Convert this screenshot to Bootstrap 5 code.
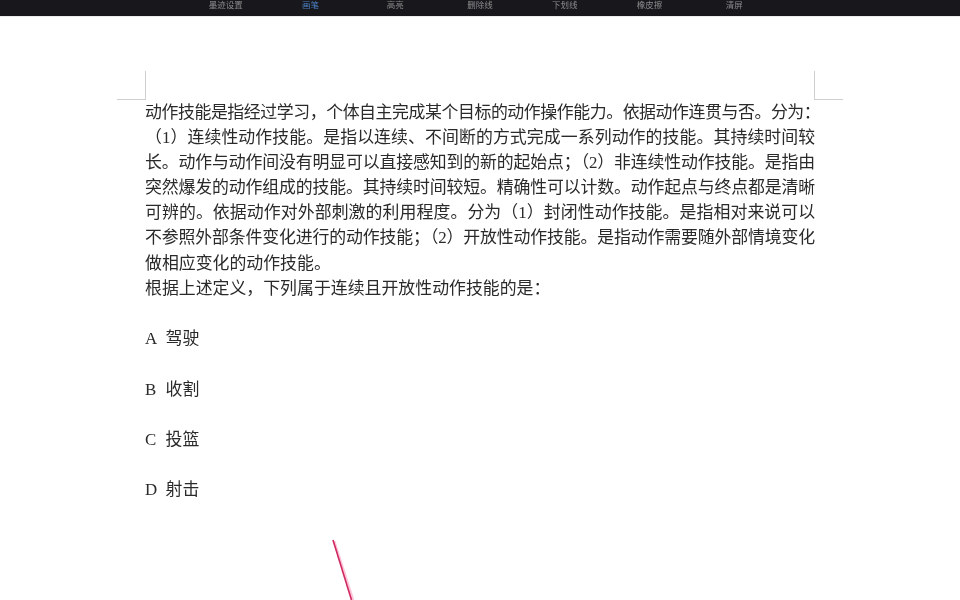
<!DOCTYPE html>
<html lang="zh-CN">
<head>
<meta charset="utf-8">
<title>动作技能</title>
<link href="https://cdn.jsdelivr.net/npm/bootstrap@5.3.0/dist/css/bootstrap.min.css" rel="stylesheet">
<style>
html,body{height:600px;overflow:hidden;background:#fff}
body{font-family:"Liberation Serif","Noto Sans CJK SC",sans-serif;color:#2a2a2a;position:relative}
.tool-bar{height:16px;background:#18171b;box-shadow:0 1px 0 #ececec}
.tool-items{width:593px}
.tool-item{flex:1 1 0;text-align:center;font:8.5px/8px "Noto Sans CJK SC",sans-serif;color:#8b8b8d;filter:blur(.4px)}
.tool-item.is-on{color:#4a7fc4}
.sheet{width:726px;padding-top:55px}
.crop-row{height:29px}
.crop-mark{width:29px;height:29px;border-color:#cfcfcf;border-style:solid;border-width:0 0 1px 0}
.crop-l{border-right-width:1px}
.crop-r{border-left-width:1px}
.body-copy{padding:0 28px;font-size:16.9px;line-height:25.1px;filter:blur(.25px)}
.body-line{display:block;text-align:justify;text-align-last:justify;white-space:nowrap;letter-spacing:-.2px}
.body-first{letter-spacing:-.42px}
.body-end{text-align-last:left;letter-spacing:0}
.choice-list{margin-top:25.6px;gap:25.1px}
.choice{line-height:25.1px}
.choice-key{display:inline-block;width:20.5px}
.ink-stroke{position:absolute;left:320px;top:530px}
</style>
</head>
<body>
<div class="tool-bar">
  <div class="tool-items d-flex mx-auto">
    <div class="tool-item">墨迹设置</div>
    <div class="tool-item is-on">画笔</div>
    <div class="tool-item">高亮</div>
    <div class="tool-item">删除线</div>
    <div class="tool-item">下划线</div>
    <div class="tool-item">橡皮擦</div>
    <div class="tool-item">清屏</div>
  </div>
</div>
<main class="sheet mx-auto">
  <div class="crop-row d-flex justify-content-between">
    <div class="crop-mark crop-l"></div>
    <div class="crop-mark crop-r"></div>
  </div>
  <div class="body-copy">
    <span class="body-line body-first">动作技能是指经过学习，个体自主完成某个目标的动作操作能力。依据动作连贯与否。分为：</span>
    <span class="body-line">（1）连续性动作技能。是指以连续、不间断的方式完成一系列动作的技能。其持续时间较</span>
    <span class="body-line">长。动作与动作间没有明显可以直接感知到的新的起始点；（2）非连续性动作技能。是指由</span>
    <span class="body-line">突然爆发的动作组成的技能。其持续时间较短。精确性可以计数。动作起点与终点都是清晰</span>
    <span class="body-line">可辨的。依据动作对外部刺激的利用程度。分为（1）封闭性动作技能。是指相对来说可以</span>
    <span class="body-line">不参照外部条件变化进行的动作技能；（2）开放性动作技能。是指动作需要随外部情境变化</span>
    <span class="body-line body-end">做相应变化的动作技能。</span>
    <span class="body-line body-end">根据上述定义，下列属于连续且开放性动作技能的是：</span>
    <div class="choice-list d-flex flex-column">
      <div class="choice"><span class="choice-key">A</span>驾驶</div>
      <div class="choice"><span class="choice-key">B</span>收割</div>
      <div class="choice"><span class="choice-key">C</span>投篮</div>
      <div class="choice"><span class="choice-key">D</span>射击</div>
    </div>
  </div>
</main>
<svg class="ink-stroke" width="50" height="70" viewBox="0 0 50 70" aria-hidden="true">
  <path d="M14 11 L33 70" stroke="#ffc4d8" stroke-width="2.6" fill="none"/>
  <path d="M13 10 L31.5 70" stroke="#cf2b60" stroke-width="1.6" fill="none"/>
</svg>
<script src="https://cdn.jsdelivr.net/npm/bootstrap@5.3.0/dist/js/bootstrap.bundle.min.js"></script>
</body>
</html>
